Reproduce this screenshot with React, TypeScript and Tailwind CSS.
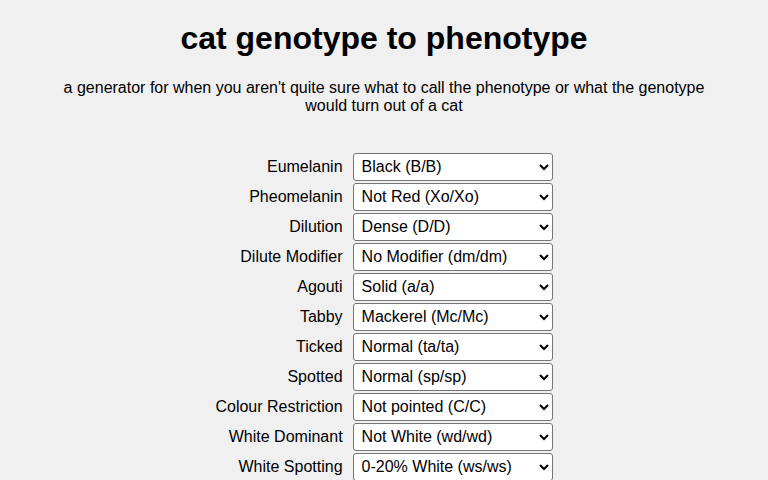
const genes: { label: string; options: string[] }[] = [
  { label: "Eumelanin", options: ["Black (B/B)", "Chocolate (b/b)", "Cinnamon (bl/bl)"] },
  { label: "Pheomelanin", options: ["Not Red (Xo/Xo)", "Red (XO/XO)"] },
  { label: "Dilution", options: ["Dense (D/D)", "Dilute (d/d)"] },
  { label: "Dilute Modifier", options: ["No Modifier (dm/dm)", "Modifier (Dm/Dm)"] },
  { label: "Agouti", options: ["Solid (a/a)", "Agouti (A/A)"] },
  { label: "Tabby", options: ["Mackerel (Mc/Mc)", "Classic (mc/mc)"] },
  { label: "Ticked", options: ["Normal (ta/ta)", "Ticked (Ta/Ta)"] },
  { label: "Spotted", options: ["Normal (sp/sp)", "Spotted (Sp/Sp)"] },
  { label: "Colour Restriction", options: ["Not pointed (C/C)", "Pointed (cs/cs)"] },
  { label: "White Dominant", options: ["Not White (wd/wd)", "White (Wd/Wd)"] },
  { label: "White Spotting", options: ["0-20% White (ws/ws)", "40-60% White (Ws/ws)"] },
];

export default function App() {
  return (
    <div className="min-h-[480px] bg-[#f0f0f0] text-black font-['Liberation_Sans',Arial,sans-serif] px-2">
      <h1 className="pt-[20px] text-[32px] leading-[37px] font-bold text-center">
        cat genotype to phenotype
      </h1>
      <p className="mt-[22px] mx-auto max-w-[660px] text-base leading-[18.4px] text-center">
        a generator for when you aren't quite sure what to call the phenotype or what the genotype would turn out of a cat
      </p>

      <div className="mt-[37px] flex justify-center">
        <div className="grid grid-cols-[auto_auto] gap-x-[10px] gap-y-[2px] items-center">
          {genes.map((g) => (
            <div key={g.label} className="contents">
              <label className="text-right text-base">{g.label}</label>
              <select
                defaultValue={g.options[0]}
                className="w-[200px] h-[28px] bg-white border border-[#767676] rounded-[3px] pl-[4px] text-base text-black"
              >
                {g.options.map((o) => (
                  <option key={o}>{o}</option>
                ))}
              </select>
            </div>
          ))}
        </div>
      </div>
    </div>
  );
}
